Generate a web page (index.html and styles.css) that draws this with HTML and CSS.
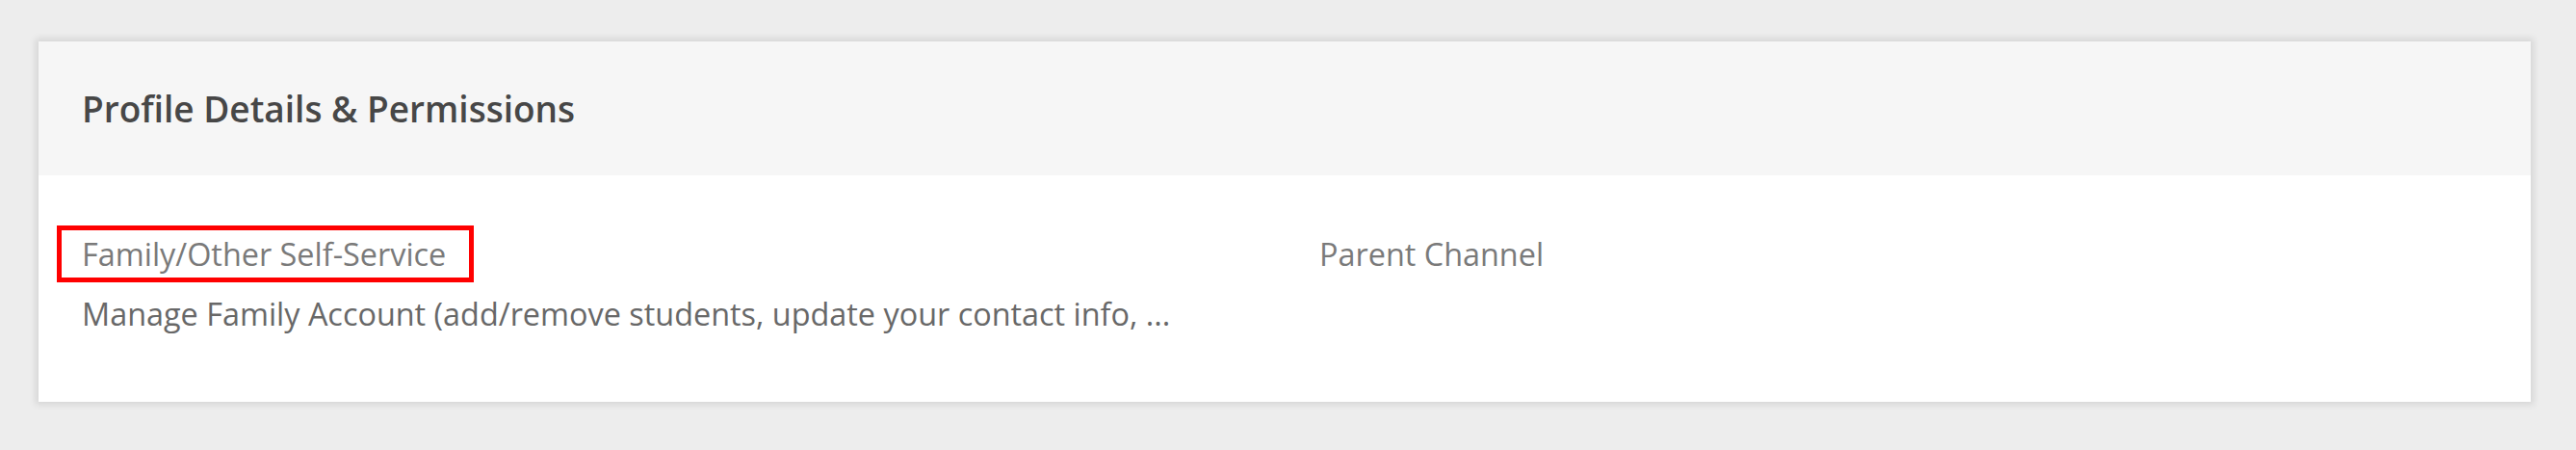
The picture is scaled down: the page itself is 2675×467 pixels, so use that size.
FILE: index.html
```html
<!DOCTYPE html>
<html lang="en">
<head>
<meta charset="utf-8">
<title>Profile Details &amp; Permissions</title>
<link rel="stylesheet" href="styles.css">
</head>
<body>
<div class="page">
  <section class="card">
    <header class="card-header">
      <h2 class="card-title">Profile Details &amp; Permissions</h2>
    </header>
    <div class="card-body">
      <div class="col">
        <div class="label"><span class="highlight">Family/Other Self-Service</span></div>
        <div class="desc">Manage Family Account (add/remove students, update your contact info, ...</div>
      </div>
      <div class="col">
        <div class="label plain">Parent Channel</div>
      </div>
    </div>
  </section>
</div>
</body>
</html>
```
FILE: styles.css
```css
html, body {
  margin: 0;
  padding: 0;
}
body {
  background: #ededed;
  font-family: "Open Sans", "Liberation Sans", sans-serif;
  width: 2675px;
  height: 467px;
  overflow: hidden;
}
.page {
  padding: 43px 47px 50px 40px;
}
.card {
  background: #ffffff;
  box-shadow: 0 0 7px 3px rgba(0, 0, 0, 0.10);
  height: 374px;
  display: flex;
  flex-direction: column;
}
.card-header {
  background: #f6f6f6;
  height: 139px;
  display: flex;
  align-items: center;
  padding-left: 45px;
  box-sizing: border-box;
}
.card-title {
  margin: 0;
  font-size: 37px;
  font-weight: 600;
  color: #474747;
  line-height: 50px;
}
.card-body {
  display: grid;
  grid-template-columns: 1285px 1fr;
  padding: 52px 45px 0 19px;
}
.col {
  display: flex;
  flex-direction: column;
  align-items: flex-start;
}
.label {
  font-size: 32.4px;
  color: #7a7a7a;
  line-height: 40px;
}
.highlight {
  display: inline-block;
  border: 5px solid #ff0000;
  padding: 4px 24px 5px 21px;
}
.plain {
  padding-top: 9px;
  padding-left: 26px;
}
.desc {
  font-size: 32.4px;
  color: #686868;
  line-height: 40px;
  padding-left: 26px;
  margin-top: 12px;
}
```
